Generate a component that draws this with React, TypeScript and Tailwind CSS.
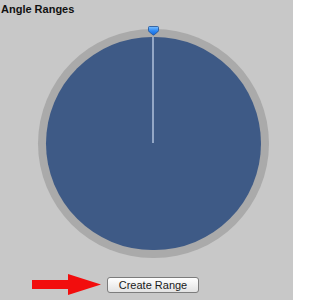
import React from "react";

const RedArrow = () => (
  <svg width="70" height="22" viewBox="0 0 70 22" className="block">
    <polygon points="0,6 36,6 36,0 69,10.5 36,21 36,15 0,15" fill="#f20d0d" />
  </svg>
);

const Thumb = () => (
  <svg width="11" height="10" viewBox="0 0 11 10" className="block">
    <defs>
      <linearGradient id="thumbFill" x1="0" y1="0" x2="0" y2="1">
        <stop offset="0" stopColor="#7cc0ff" />
        <stop offset="0.5" stopColor="#2f8af5" />
        <stop offset="1" stopColor="#1466d8" />
      </linearGradient>
    </defs>
    <path
      d="M1.5 0.5 H9.5 Q10.5 0.5 10.5 1.5 V4.5 Q10.5 5.3 9.8 5.8 L6.2 8.8 Q5.5 9.4 4.8 8.8 L1.2 5.8 Q0.5 5.3 0.5 4.5 V1.5 Q0.5 0.5 1.5 0.5 Z"
      fill="url(#thumbFill)"
      stroke="#1d4f94"
      strokeWidth="0.8"
    />
  </svg>
);

export default function App() {
  return (
    <div
      className="w-[293px] h-[300px] bg-[#c8c8c8] flex flex-col overflow-hidden"
      style={{ fontFamily: '"Liberation Sans", Arial, sans-serif' }}
    >
      {/* title */}
      <div className="pl-[1px] pt-[3px] h-[15px] text-[11px] leading-[12px] font-bold text-[#111]">
        Angle Ranges
      </div>

      {/* angle dial */}
      <div className="ml-[38px] mt-[14px] relative w-[231px] h-[229px] rounded-full bg-[#aaaaaa] p-[8px]">
        <div className="w-full h-full rounded-full bg-[#3e5a86]" />
        <div className="absolute left-[114px] top-[8px] w-[2px] h-[106px] bg-[#93a7c6]" />
        <div className="absolute left-[110px] top-[-3px]">
          <Thumb />
        </div>
      </div>

      {/* create button */}
      <div className="flex items-center pl-[32px] mt-[16px] gap-[5px]">
        <RedArrow />
        <button className="w-[92px] h-[16px] rounded-[3px] border border-[#7c7c7c] bg-gradient-to-b from-white to-[#e2e2e2] text-[11px] leading-[14px] text-[#1a1a1a]">
          Create Range
        </button>
      </div>
    </div>
  );
}
